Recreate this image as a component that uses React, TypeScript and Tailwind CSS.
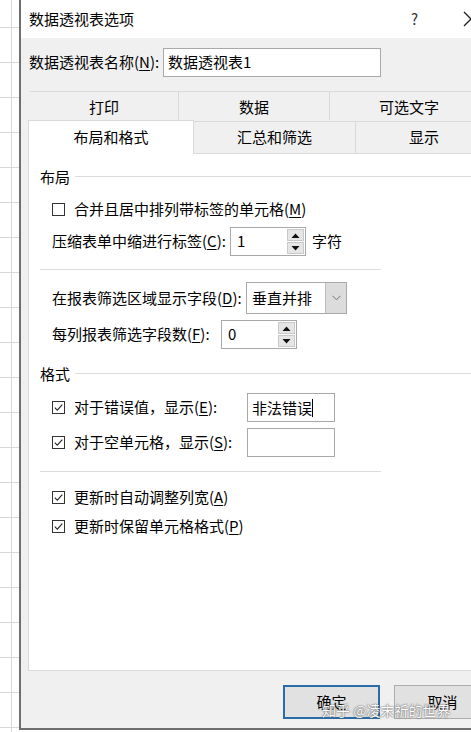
import React from "react";

const font = { fontFamily: '"Noto Sans CJK SC", "Noto Sans", sans-serif' };

function U({ c }: { c: string }) {
  return <span className="underline underline-offset-2 decoration-1">{c}</span>;
}

function CheckBox({ checked }: { checked: boolean }) {
  return (
    <div className="w-[13px] h-[13px] border border-[#333] bg-white shrink-0 flex items-center justify-center">
      {checked && (
        <svg width="11" height="11" viewBox="0 0 11 11">
          <path d="M1.8 5.6 L4.3 8.1 L9.3 2.6" fill="none" stroke="#222" strokeWidth="1.1" />
        </svg>
      )}
    </div>
  );
}

function Spinner({ value }: { value: string }) {
  return (
    <div className="w-[76px] h-[29px] border border-[#a9a9a9] bg-white flex">
      <div className="flex-1 pl-[6px] text-[15px] leading-[26px]">{value}</div>
      <div className="w-[19px] flex flex-col p-[1px] gap-[1px]">
        <div className="flex-1 bg-[#e6e6e6] border border-[#c9c9c9] flex items-center justify-center">
          <svg width="9" height="5" viewBox="0 0 9 5"><path d="M0.5 5 L4.5 0.5 L8.5 5 Z" fill="#111" /></svg>
        </div>
        <div className="flex-1 bg-[#e6e6e6] border border-[#c9c9c9] flex items-center justify-center">
          <svg width="9" height="5" viewBox="0 0 9 5"><path d="M0.5 0 L4.5 4.5 L8.5 0 Z" fill="#111" /></svg>
        </div>
      </div>
    </div>
  );
}

export default function App() {
  return (
    <div className="relative w-[471px] h-[732px] overflow-hidden flex bg-white text-black" style={font}>
      {/* spreadsheet strip */}
      <div className="w-[19px] h-full shrink-0 flex bg-[linear-gradient(to_bottom,transparent_27px,#d8d8d8_27px,#d8d8d8_28px,transparent_28px)] bg-[length:100%_35px]">
        <div className="w-[12px] h-full border-r border-[#d8d8d8]" />
      </div>
      {/* dialog */}
      <div className="w-[490px] h-[730px] shrink-0 border-l-2 border-b-2 border-[#6f6f6f] bg-[#f0f0f0] flex flex-col">
        {/* title bar */}
        <div className="h-[38px] bg-white flex items-center pl-[8px] shrink-0">
          <div className="text-[15px] w-[382px] shrink-0">数据透视表选项</div>
          <div className="w-[52px] shrink-0 text-[15px] text-[#333]">?</div>
          <svg width="16" height="16" viewBox="0 0 16 16" className="shrink-0">
            <path d="M1 1 L15 15 M15 1 L1 15" stroke="#222" strokeWidth="1.3" fill="none" />
          </svg>
        </div>
        {/* name row */}
        <div className="flex items-center pl-[8px] mt-[10px] h-[29px]">
          <div className="text-[15px] w-[134px]">数据透视表名称(<U c="N" />):</div>
          <div className="w-[218px] h-[29px] border border-[#a9a9a9] bg-white text-[15px] leading-[26px] pl-[4px]">
            数据透视表1
          </div>
        </div>
        {/* tabs back row */}
        <div className="mt-[14px] ml-[9px] flex h-[29px] border-t border-[#d9d9d9] text-[15px]">
          <div className="w-[149px] flex items-center justify-center border-r border-[#d9d9d9] pt-[2px]">打印</div>
          <div className="w-[151px] flex items-center justify-center border-r border-[#d9d9d9] pt-[2px]">数据</div>
          <div className="w-[158px] flex items-center justify-center pt-[2px]">可选文字</div>
        </div>
        {/* tabs front row */}
        <div className="ml-[7px] flex h-[33px] text-[15px] items-end">
          <div className="w-[166px] h-[34px] bg-white border-l border-t border-r border-[#d9d9d9] flex items-center justify-center -mb-[1px] relative z-10">布局和格式</div>
          <div className="w-[162px] h-[32px] flex items-center justify-center border-t border-r border-[#d9d9d9]">汇总和筛选</div>
          <div className="w-[140px] h-[32px] flex items-center justify-center border-t border-[#d9d9d9] pr-[4px]">显示</div>
        </div>
        {/* panel */}
        <div className="ml-[7px] w-[470px] h-[518px] bg-white border border-[#d9d9d9] flex flex-col text-[15px]">
          {/* 布局 */}
          <div className="mt-[13px] ml-[11px] h-[20px] flex items-center">
            <span className="leading-[20px]">布局</span>
            <div className="flex-1 h-px bg-[#dcdcdc] ml-[5px] -mt-[2px]" />
          </div>
          <div className="mt-[10px] ml-[23px] h-[24px] flex items-center">
            <CheckBox checked={false} />
            <span className="ml-[9px]">合并且居中排列带标签的单元格(<U c="M" />)</span>
          </div>
          <div className="mt-[6px] ml-[23px] h-[29px] flex items-center">
            <span className="w-[178px]">压缩表单中缩进行标签(<U c="C" />):</span>
            <Spinner value="1" />
            <span className="ml-[6px]">字符</span>
          </div>
          <div className="mt-[13px] ml-[11px] w-[341px] h-px bg-[#dcdcdc]" />
          <div className="mt-[12px] ml-[23px] h-[32px] flex items-center">
            <span className="w-[194px]">在报表筛选区域显示字段(<U c="D" />):</span>
            <div className="w-[101px] h-[32px] border border-[#a9a9a9] bg-white flex">
              <div className="flex-1 pl-[5px] leading-[29px]">垂直并排</div>
              <div className="w-[21px] bg-[#dcdcdc] border-l border-[#bcbcbc] flex items-center justify-center">
                <svg width="9" height="6" viewBox="0 0 9 6"><path d="M0.5 0.8 L4.5 4.8 L8.5 0.8" fill="none" stroke="#666" strokeWidth="0.9" /></svg>
              </div>
            </div>
          </div>
          <div className="mt-[6px] ml-[23px] h-[29px] flex items-center">
            <span className="w-[169px]">每列报表筛选字段数(<U c="F" />):</span>
            <Spinner value="0" />
          </div>
          {/* 格式 */}
          <div className="mt-[15px] ml-[11px] h-[20px] flex items-center">
            <span className="leading-[20px]">格式</span>
            <div className="flex-1 h-px bg-[#dcdcdc] ml-[5px] -mt-[2px]" />
          </div>
          <div className="mt-[9px] ml-[23px] h-[29px] flex items-center">
            <CheckBox checked={true} />
            <span className="ml-[9px] w-[173px]">对于错误值，显示(<U c="E" />):</span>
            <div className="w-[88px] h-[29px] border border-[#a9a9a9] bg-white pl-[4px] leading-[26px] flex items-center">
              <span>非法错误</span>
              <span className="w-px h-[18px] bg-black" />
            </div>
          </div>
          <div className="mt-[6px] ml-[23px] h-[29px] flex items-center">
            <CheckBox checked={true} />
            <span className="ml-[9px] w-[173px]">对于空单元格，显示(<U c="S" />):</span>
            <div className="w-[88px] h-[29px] border border-[#a9a9a9] bg-white" />
          </div>
          <div className="mt-[14px] ml-[11px] w-[341px] h-px bg-[#dcdcdc]" />
          <div className="mt-[13px] ml-[23px] h-[24px] flex items-center">
            <CheckBox checked={true} />
            <span className="ml-[9px]">更新时自动调整列宽(<U c="A" />)</span>
          </div>
          <div className="mt-[5px] ml-[23px] h-[24px] flex items-center">
            <CheckBox checked={true} />
            <span className="ml-[9px]">更新时保留单元格格式(<U c="P" />)</span>
          </div>
        </div>
        {/* buttons */}
        <div className="mt-[14px] ml-[262px] flex gap-[14px] text-[15px]">
          <div className="w-[97px] h-[34px] border-2 border-[#2a6ca8] bg-[#e1e1e1] flex items-center justify-center">确定</div>
          <div className="w-[97px] h-[34px] border border-[#adadad] bg-[#e1e1e1] flex items-center justify-center">取消</div>
        </div>
      </div>
      {/* watermark */}
      <div className="absolute left-[322px] top-[700px] text-[14px] text-white opacity-90 [text-shadow:0_0_2px_#555,0_0_1px_#555]">
        知乎 @凌末祈的世界
      </div>
    </div>
  );
}
